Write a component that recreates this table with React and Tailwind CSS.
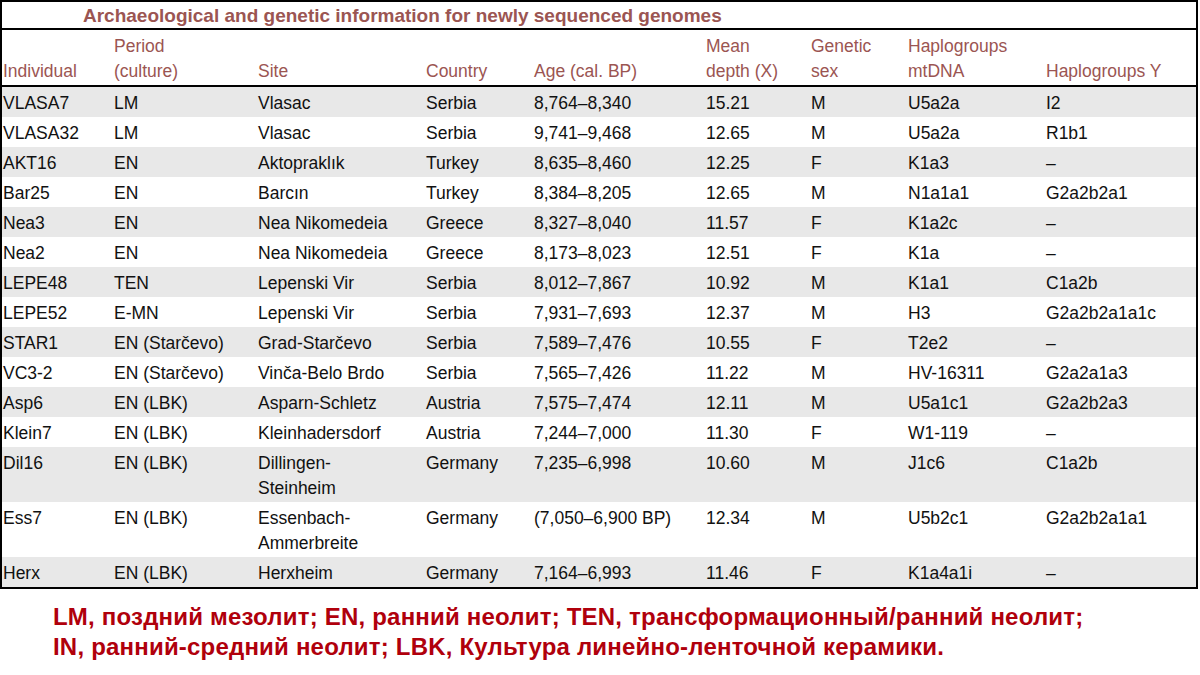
const rows = [
  ["VLASA7", "LM", "Vlasac", "Serbia", "8,764–8,340", "15.21", "M", "U5a2a", "I2"],
  ["VLASA32", "LM", "Vlasac", "Serbia", "9,741–9,468", "12.65", "M", "U5a2a", "R1b1"],
  ["AKT16", "EN", "Aktopraklık", "Turkey", "8,635–8,460", "12.25", "F", "K1a3", "–"],
  ["Bar25", "EN", "Barcın", "Turkey", "8,384–8,205", "12.65", "M", "N1a1a1", "G2a2b2a1"],
  ["Nea3", "EN", "Nea Nikomedeia", "Greece", "8,327–8,040", "11.57", "F", "K1a2c", "–"],
  ["Nea2", "EN", "Nea Nikomedeia", "Greece", "8,173–8,023", "12.51", "F", "K1a", "–"],
  ["LEPE48", "TEN", "Lepenski Vir", "Serbia", "8,012–7,867", "10.92", "M", "K1a1", "C1a2b"],
  ["LEPE52", "E-MN", "Lepenski Vir", "Serbia", "7,931–7,693", "12.37", "M", "H3", "G2a2b2a1a1c"],
  ["STAR1", "EN (Starčevo)", "Grad-Starčevo", "Serbia", "7,589–7,476", "10.55", "F", "T2e2", "–"],
  ["VC3-2", "EN (Starčevo)", "Vinča-Belo Brdo", "Serbia", "7,565–7,426", "11.22", "M", "HV-16311", "G2a2a1a3"],
  ["Asp6", "EN (LBK)", "Asparn-Schletz", "Austria", "7,575–7,474", "12.11", "M", "U5a1c1", "G2a2b2a3"],
  ["Klein7", "EN (LBK)", "Kleinhadersdorf", "Austria", "7,244–7,000", "11.30", "F", "W1-119", "–"],
  ["Dil16", "EN (LBK)", ["Dillingen-", "Steinheim"], "Germany", "7,235–6,998", "10.60", "M", "J1c6", "C1a2b"],
  ["Ess7", "EN (LBK)", ["Essenbach-", "Ammerbreite"], "Germany", "(7,050–6,900 BP)", "12.34", "M", "U5b2c1", "G2a2b2a1a1"],
  ["Herx", "EN (LBK)", "Herxheim", "Germany", "7,164–6,993", "11.46", "F", "K1a4a1i", "–"],
];

const headers = [
  ["Individual"],
  ["Period", "(culture)"],
  ["Site"],
  ["Country"],
  ["Age (cal. BP)"],
  ["Mean", "depth (X)"],
  ["Genetic", "sex"],
  ["Haplogroups", "mtDNA"],
  ["Haplogroups Y"],
];

const widths = ["w-[111px]", "w-[144px]", "w-[168px]", "w-[108px]", "w-[172px]", "w-[105px]", "w-[97px]", "w-[138px]", "w-[151px]"];

export default function App() {
  return (
    <div className="w-[1200px] h-[675px] bg-white overflow-hidden" style={{ fontFamily: '"Liberation Sans", Arial, sans-serif' }}>
      <div className="w-[1198px] border-2 border-black">
        <div className="h-[28px] border-b-2 border-black pl-[81px] text-[19px] leading-[28px] font-bold text-[#9b5552]">
          Archaeological and genetic information for newly sequenced genomes
        </div>
        <table className="table-fixed border-collapse w-full text-[17.5px]">
          <colgroup>
            {widths.map((w, i) => (
              <col key={i} className={w} />
            ))}
          </colgroup>
          <thead>
            <tr className="h-[56px] border-b-2 border-black">
              {headers.map((h, i) => (
                <th key={i} className="pl-px pb-[1px] align-bottom text-left font-normal leading-[25px] text-[#9b5552] whitespace-nowrap">
                  {h.map((l, j) => (
                    <div key={j}>{l}</div>
                  ))}
                </th>
              ))}
            </tr>
          </thead>
          <tbody>
            {rows.map((r, i) => (
              <tr key={i} className={i % 2 === 0 ? "bg-[#e8e8e8]" : "bg-white"}>
                {r.map((c, j) => (
                  <td key={j} className="pl-px pt-[4px] pb-[1px] align-top leading-[25px] text-[#111] whitespace-nowrap">
                    {Array.isArray(c) ? c.map((l, k) => <div key={k}>{l}</div>) : c}
                  </td>
                ))}
              </tr>
            ))}
          </tbody>
        </table>
      </div>
      <div className="mt-[13px] pl-[53px] text-[24px] leading-[30px] font-bold tracking-[0.2px] text-[#b0000c] whitespace-nowrap">
        <div>LM, поздний мезолит; EN, ранний неолит; TEN, трансформационный/ранний неолит;</div>
        <div>IN, ранний-средний неолит; LBK, Культура линейно-ленточной керамики.</div>
      </div>
    </div>
  );
}
